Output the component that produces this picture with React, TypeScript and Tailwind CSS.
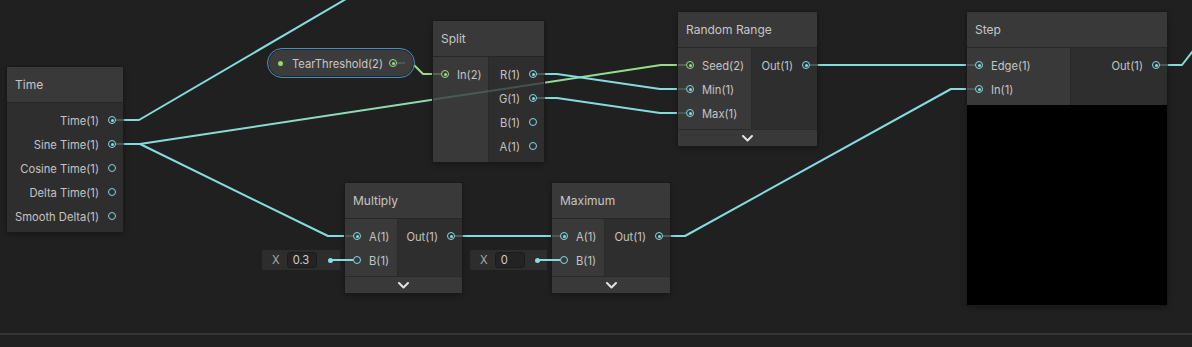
import React from 'react';

const TEAL = '#84dcdf';
const GREEN = '#9bdb84';

type Port = { label: string; on?: boolean; green?: boolean };

type NodeDef = {
  title: string;
  pos: string;
  inWidth?: string;
  inputs: Port[];
  outputs: Port[];
  footer?: boolean;
  preview?: boolean;
};

const nodes: NodeDef[] = [
  {
    title: 'Time',
    pos: 'left-[7px] top-[67px] w-[116px]',
    inputs: [],
    outputs: [
      { label: 'Time(1)', on: true },
      { label: 'Sine Time(1)', on: true },
      { label: 'Cosine Time(1)' },
      { label: 'Delta Time(1)' },
      { label: 'Smooth Delta(1)' },
    ],
  },
  {
    title: 'Split',
    pos: 'left-[433px] top-[21px] w-[111px]',
    inWidth: 'w-[56px]',
    inputs: [{ label: 'In(2)', on: true, green: true }],
    outputs: [
      { label: 'R(1)', on: true },
      { label: 'G(1)', on: true },
      { label: 'B(1)' },
      { label: 'A(1)' },
    ],
  },
  {
    title: 'Random Range',
    pos: 'left-[678px] top-[12px] w-[139px]',
    inWidth: 'w-[74px]',
    inputs: [
      { label: 'Seed(2)', on: true, green: true },
      { label: 'Min(1)', on: true },
      { label: 'Max(1)', on: true },
    ],
    outputs: [{ label: 'Out(1)', on: true }],
    footer: true,
  },
  {
    title: 'Step',
    pos: 'left-[967px] top-[12px] w-[200px]',
    inWidth: 'w-[104px]',
    inputs: [
      { label: 'Edge(1)', on: true },
      { label: 'In(1)', on: true },
    ],
    outputs: [{ label: 'Out(1)', on: true }],
    preview: true,
  },
  {
    title: 'Multiply',
    pos: 'left-[345px] top-[183px] w-[117px]',
    inWidth: 'w-[53px]',
    inputs: [
      { label: 'A(1)', on: true },
      { label: 'B(1)' },
    ],
    outputs: [{ label: 'Out(1)', on: true }],
    footer: true,
  },
  {
    title: 'Maximum',
    pos: 'left-[552px] top-[183px] w-[118px]',
    inWidth: 'w-[53px]',
    inputs: [
      { label: 'A(1)', on: true },
      { label: 'B(1)' },
    ],
    outputs: [{ label: 'Out(1)', on: true }],
    footer: true,
  },
];

const Ring = ({ port, side }: { port: Port; side: 'in' | 'out' }) => {
  const color = port.green ? GREEN : TEAL;
  return (
    <span
      className="relative w-2 h-2 shrink-0 rounded-full border-[1.5px] flex items-center justify-center"
      style={{ borderColor: color }}
    >
      {port.on && <span className="w-[3px] h-[3px] rounded-full" style={{ background: color }} />}
      {port.on && side === 'out' && (
        <span className="absolute left-[7px] top-[2px] w-[8px] h-[2px] bg-[#4b5858]" />
      )}
      {port.on && side === 'in' && (
        <span
          className={
            'absolute right-[7px] top-[2px] w-[8px] h-[2px] ' +
            (port.green ? 'bg-[#56604f]' : 'bg-[#4b5858]')
          }
        />
      )}
    </span>
  );
};

const Chevron = () => (
  <svg width="11" height="7" viewBox="0 0 11 7" fill="none">
    <path d="M1 1l4.5 4.5L10 1" stroke="#e2e2e2" strokeWidth="2" strokeLinecap="round" strokeLinejoin="round" />
  </svg>
);

const Node = ({ n }: { n: NodeDef }) => (
  <div className={'absolute flex flex-col shadow-[0_0_0_1px_#1a1a1a,0_2px_6px_rgba(0,0,0,0.35)] ' + n.pos}>
    <div className="h-[36px] flex items-center pl-2 pt-[1px] bg-[#393939] border-b border-[#262626] text-[12px] text-[#c6c6c6]">
      {n.title}
    </div>
    <div className="flex">
      {n.inputs.length > 0 && (
        <div className={'bg-[#393939] pt-[5px] pb-[4px] border-r border-[#2a2a2a] ' + n.inWidth}>
          {n.inputs.map((p) => (
            <div key={p.label} className="h-6 flex items-center gap-2 pl-2 text-[11.2px] text-[#c4c4c4]">
              <Ring port={p} side="in" />
              <span className="pt-[2px]">{p.label}</span>
            </div>
          ))}
        </div>
      )}
      <div className="flex-1 bg-[#2e2e2e] pt-[5px] pb-[4px]">
        {n.outputs.map((p) => (
          <div key={p.label} className="h-6 flex items-center justify-end gap-[9px] pr-[7px] text-[11.2px] text-[#c4c4c4]">
            <span className="pt-[2px]">{p.label}</span>
            <Ring port={p} side="out" />
          </div>
        ))}
      </div>
    </div>
    {n.footer && (
      <div className="h-[17px] flex items-center justify-center bg-[#393939] border-t border-[#2a2a2a]">
        <Chevron />
      </div>
    )}
    {n.preview && <div className="h-[200px] bg-black" />}
  </div>
);

const ValueField = ({ pos, value }: { pos: string; value: string }) => (
  <div className={'absolute h-[20px] flex items-center bg-[#2d2d2d] pl-[10px] pr-[7px] text-[11.2px] ' + pos}>
    <span className="text-[#a8a8a8]">X</span>
    <span className="ml-[7px] w-[30px] h-[16px] flex items-center pl-[5px] bg-[#232323] border border-[#1b1b1b] rounded-[3px] text-[#cfcfcf]">
      {value}
    </span>
    <span className="ml-auto w-[5px] h-[5px] rounded-full bg-[#84dcdf]" />
  </div>
);

const sineSeed = 'M123 144 L140 144 L661 65 L678 65';

export default function App() {
  return (
    <div className="w-[1192px] h-[347px] flex flex-col bg-[#202020] font-['Inter','Noto_Sans',sans-serif] overflow-hidden">
      <div className="relative flex-1 overflow-hidden">
        <svg className="absolute inset-0" width="1192" height="333" fill="none">
          <defs>
            <linearGradient id="sg" gradientUnits="userSpaceOnUse" x1="140" y1="0" x2="661" y2="0">
              <stop offset="0" stopColor={TEAL} />
              <stop offset="1" stopColor={GREEN} />
            </linearGradient>
          </defs>
          <g strokeWidth="2" strokeLinejoin="round">
            <path d="M123 120 L139 120 L346 -1" stroke={TEAL} />
            <path d={sineSeed} stroke="url(#sg)" />
            <path d="M123 144 L140 144 L328 236 L345 236" stroke={TEAL} />
            <path d="M414 65 L423 74 L433 74" stroke={GREEN} />
            <path d="M544 74 L557 74 L660 89 L678 89" stroke={TEAL} />
            <path d="M544 98 L557 98 L660 113 L678 113" stroke={TEAL} />
            <path d="M817 65 L967 65" stroke={TEAL} />
            <path d="M462 236 L552 236" stroke={TEAL} />
            <path d="M670 236 L685 236 L951 89 L967 89" stroke={TEAL} />
            <path d="M1167 65 L1182 65 L1200 42" stroke={TEAL} />
          </g>
        </svg>

        {nodes.map((n) => (
          <Node key={n.title} n={n} />
        ))}

        <div className="absolute left-[267px] top-[48px] w-[148px] h-[30px] rounded-full bg-[#3c3c3c] border border-[#4b8dc4] shadow-[inset_0_0_0_1px_#232323] flex items-center pl-[10px] pr-[17px]">
          <span className="w-[5px] h-[5px] rounded-full bg-[#98d86c]" />
          <span className="ml-[9px] pt-[2px] text-[11.2px] text-[#c6c6c6]">TearThreshold(2)</span>
          <span className="ml-auto">
            <Ring port={{ label: 'tt', on: true, green: true }} side="out" />
          </span>
        </div>

        <ValueField pos="left-[262px] top-[250px] w-[78px]" value="0.3" />
        <ValueField pos="left-[470px] top-[250px] w-[77px]" value="0" />

        <svg className="absolute inset-0 pointer-events-none" width="1192" height="333" fill="none">
          <defs>
            <clipPath id="splitClip">
              <rect x="433" y="21" width="111" height="141" />
            </clipPath>
          </defs>
          <path d={sineSeed} stroke="#7fa890" strokeWidth="2" opacity="0.3" clipPath="url(#splitClip)" />
          <path d="M332 260 L353 260" stroke={TEAL} strokeWidth="2" />
          <path d="M539 260 L560 260" stroke={TEAL} strokeWidth="2" />
        </svg>
      </div>
      <div className="h-[14px] border-t-2 border-[#353535] bg-[#212121]" />
    </div>
  );
}
